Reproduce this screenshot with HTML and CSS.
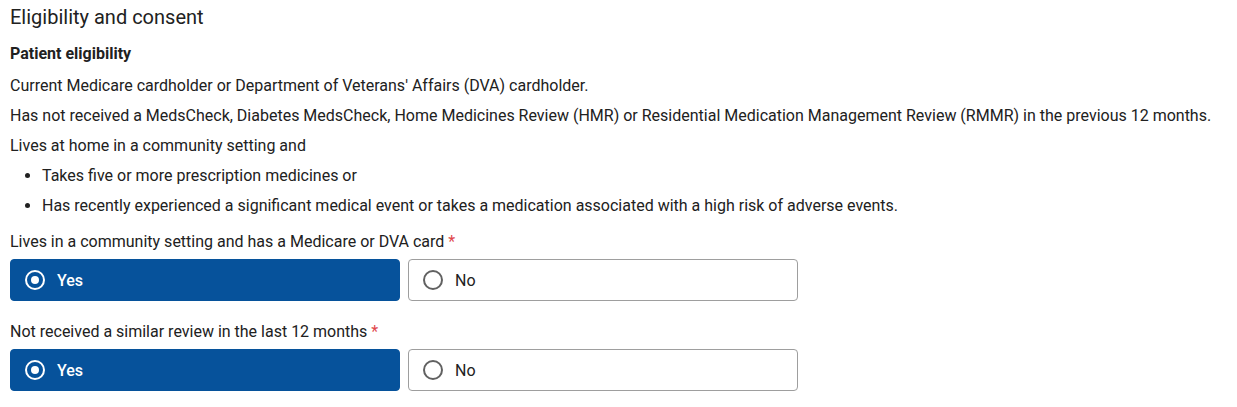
FILE: index.html
```html
<!DOCTYPE html>
<html>
 <head>
  <title>Eligibility and consent</title>
  <link rel="stylesheet" href="styles.css">
 </head>
 <body>
  <div class="section">
   <h2 class="title">Eligibility and consent</h2>
   <h3 class="subtitle">Patient eligibility</h3>
   <p class="line">Current Medicare cardholder or Department of Veterans' Affairs (DVA) cardholder.</p>
   <p class="line">Has not received a MedsCheck, Diabetes MedsCheck, Home Medicines Review (HMR) or Residential Medication Management Review (RMMR) in the previous 12 months.</p>
   <p class="line">Lives at home in a community setting and</p>
   <ul class="bullets">
    <li>Takes five or more prescription medicines or</li>
    <li>Has recently experienced a significant medical event or takes a medication associated with a high risk of adverse events.</li>
   </ul>

   <div class="question">
    <div class="label">Lives in a community setting and has a Medicare or DVA card <span class="req">*</span></div>
    <div class="choices">
     <div class="choice selected"><span class="radio"></span>Yes</div>
     <div class="choice"><span class="radio"></span>No</div>
    </div>
   </div>

   <div class="question">
    <div class="label">Not received a similar review in the last 12 months <span class="req">*</span></div>
    <div class="choices">
     <div class="choice selected"><span class="radio"></span>Yes</div>
     <div class="choice"><span class="radio"></span>No</div>
    </div>
   </div>
  </div>
 </body>
</html>
```

FILE: styles.css
```css
body {
 margin:      0;
 font-family: Roboto, "Liberation Sans", sans-serif;
 font-size:   16px;
 color:       #212121;
 background:  #ffffff;
}

.section {
 padding: 5px 10px 0 10px;
}

.title {
 margin:      0;
 font-size:   20px;
 font-weight: 400;
 line-height: 24px;
}

.subtitle {
 margin:      15px 0 7px 0;
 font-size:   16px;
 font-weight: 700;
 line-height: 20px;
}

.line {
 margin:      0;
 line-height: 30px;
}

.bullets {
 margin:       0;
 padding-left: 32px;
 line-height:  30px;
}

.question {
 margin-top: 11px;
}

.question + .question {
 margin-top: 21px;
}

.label {
 line-height:   20px;
 margin-bottom: 7px;
}

.req {
 color: #e0474c;
}

.choices {
 display: flex;
 gap:     8px;
}

.choice {
 display:       flex;
 align-items:   center;
 gap:           12px;
 box-sizing:    border-box;
 width:         390px;
 height:        42px;
 padding-left:  14px;
 border:        1px solid #9e9e9e;
 border-radius: 4px;
 background:    #ffffff;
}

.choice.selected {
 background:   #06529b;
 border-color: #06529b;
 color:        #ffffff;
 font-weight:  500;
}

.radio {
 box-sizing:    border-box;
 width:         20px;
 height:        20px;
 border:        2px solid #616161;
 border-radius: 50%;
 display:       flex;
 align-items:   center;
 justify-content: center;
}

.choice.selected .radio {
 border-color: #ffffff;
}

.choice.selected .radio::after {
 content:       "";
 width:         8px;
 height:        8px;
 border-radius: 50%;
 background:    #ffffff;
}
```
